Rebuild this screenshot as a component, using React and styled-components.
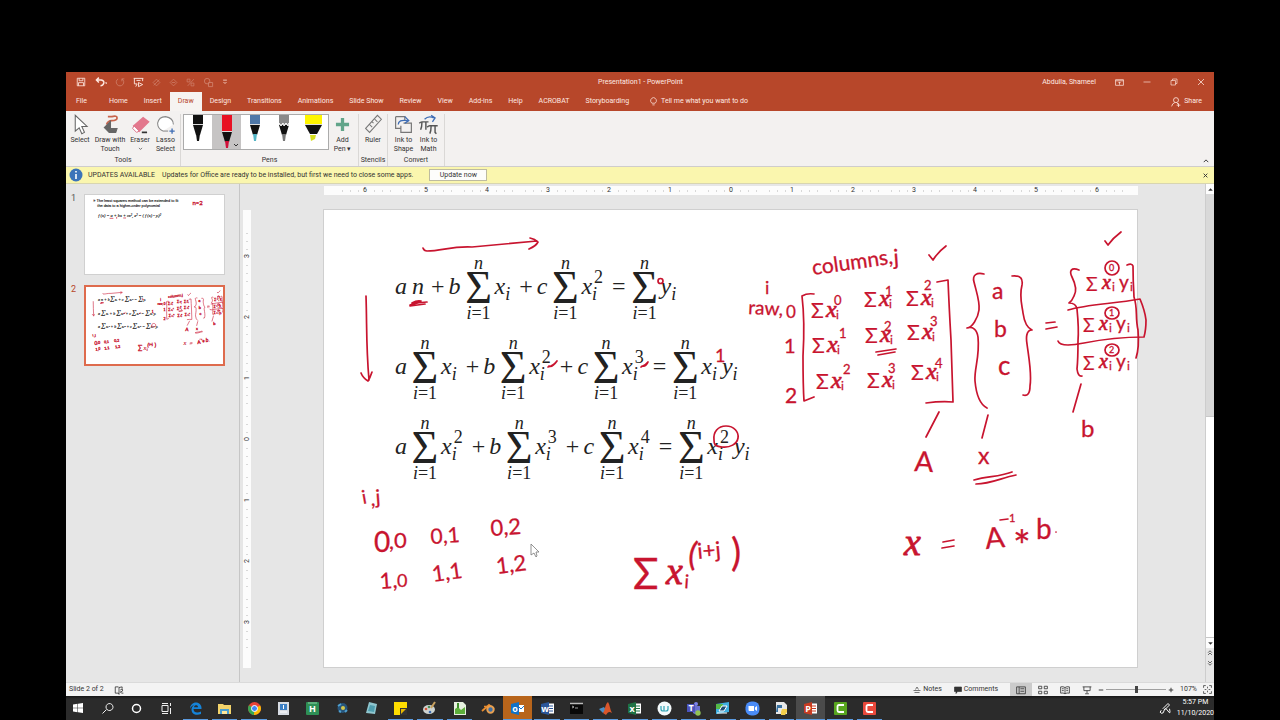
import React, { useState } from 'react';
import styled, { createGlobalStyle } from 'styled-components';

const GlobalStyle = createGlobalStyle`
    * {
        box-sizing: border-box;
    }

    body {
        margin: 0;
        background: #000000;
        font-family: Roboto, 'Noto Sans', sans-serif;
        font-size: 7px;
        line-height: 9px;
        color: #333333;
    }

    button, input {
        font: inherit;
        color: inherit;
        margin: 0;
        padding: 0;
        border: none;
        background: transparent;
    }

    svg {
        display: block;
        flex: none;
    }
`
const Screen = styled.div`
    min-height: 100vh;
    padding: 72px 66px 0;
    display: flex;
    flex-direction: column;
`
const TitleBar = styled.header`
    height: 20px;
    background: #B7472A;
    color: #FFE9E2;
    display: grid;
    grid-template-columns: 1fr auto 1fr;
    align-items: center;
    padding: 0 9px 0 10px;
`
const QuickAccess = styled.div`
    display: flex;
    align-items: center;
    gap: 8px;
`
const IconButton = styled.button`
    display: flex;
    align-items: center;
    justify-content: center;
    opacity: ${({ $dim }) => $dim ? 0.35 : 1};
`
const WindowTools = styled.div`
    display: flex;
    align-items: center;
    justify-content: flex-end;
    gap: 19px;
`
const Tabs = styled.nav`
    height: 19px;
    background: #B7472A;
    display: flex;
    align-items: stretch;
    padding: 0 12px 0 2px;
`
const Tab = styled.button`
    padding: 0 8px;
    color: ${({ $active }) => $active ? '#B7472A' : '#FFE9E2'};
    background: ${({ $active }) => $active ? '#F6F3F1' : 'transparent'};
    display: flex;
    align-items: center;
    gap: 3px;
    white-space: nowrap;

    &:first-child {
        margin-right: 6px;
    }
`
const TellMe = styled(Tab)`
    padding-left: 12px;
`
const Share = styled(Tab)`
    margin-left: auto;
    padding: 0;
`
const Ribbon = styled.section`
    height: 56px;
    background: #F3F1F0;
    border-bottom: 1px solid #CFCDCB;
    display: flex;
    padding-top: 3px;
`
const Group = styled.div`
    width: ${({ $width }) => $width}px;
    border-right: 1px solid #DAD8D6;
    display: flex;
    flex-direction: column;
    justify-content: space-between;
`
const GroupRow = styled.div`
    display: flex;
    justify-content: center;
    align-items: flex-start;
`
const GroupLabel = styled.div`
    text-align: center;
    height: 10px;
`
const Tool = styled.button`
    width: ${({ $width }) => $width || 28}px;
    display: flex;
    flex-direction: column;
    align-items: center;
    gap: 1px;
    line-height: 9px;
    white-space: pre;
    text-align: center;
`
const PenGallery = styled.div`
    width: 146px;
    height: 36px;
    background: #FFFFFF;
    border: 1px solid #ABABAB;
    display: flex;
`
const Pen = styled.button`
    flex: 1;
    display: flex;
    justify-content: center;
    background: ${({ $active }) => $active ? '#C6C4C4' : 'transparent'};
`
const Collapse = styled(IconButton)`
    margin: auto 5px 2px auto;
`
const UpdateBar = styled.section`
    height: 17px;
    background: #FAF6AE;
    border-bottom: 1px solid #D8D5B0;
    display: flex;
    align-items: center;
    padding: 0 6px 0 3px;
`
const UpdateTitle = styled.strong`
    font-weight: 400;
    margin: 0 7px 0 5px;
`
const UpdateButton = styled.button`
    width: 58px;
    height: 12px;
    margin: 0 auto 0 16px;
    background: #FDFDFB;
    border: 1px solid #BDBBA0;
`
const Workspace = styled.main`
    flex: 1;
    display: flex;
    background: #E6E6E6;
`
const Slides = styled.aside`
    width: 174px;
    flex: none;
    border-right: 1px solid #C6C6C6;
    padding: 10px 14px 0 5px;
    display: flex;
    flex-direction: column;
    gap: 10px;
`
const ThumbRow = styled.button`
    display: flex;
    align-items: flex-start;
    gap: 8px;
    font-size: 9px;
    text-align: left;
    color: ${({ $active }) => $active ? '#B7472A' : '#555555'};
`
const Thumb = styled.div`
    flex: 1;
    background: #FFFFFF;
    border: ${({ $active }) => $active ? '2px solid #DE6B4D' : '1px solid #D0D0D0'};

    svg {
        width: 100%;
    }
`
const Editor = styled.div`
    flex: 1;
    min-width: 0;
    display: flex;
    flex-direction: column;
`
const RulerTop = styled.div`
    height: 9px;
    margin: 2px 76px 0 84px;
    background: #FCFCFC;
    display: flex;
    justify-content: center;
    overflow: hidden;
`
const RulerCell = styled.div`
    width: 61px;
    flex: none;
    display: flex;
    align-items: center;
    justify-content: center;
    background: repeating-linear-gradient(90deg, transparent 0 7px, #D8D8D8 7px 8px) center / 100% 2px no-repeat;

    span {
        background: #FCFCFC;
        padding: 0 3px;
    }
`
const EditorBody = styled.div`
    flex: 1;
    display: flex;
`
const RulerSide = styled.div`
    width: 8px;
    margin: 15px 0 14px 3px;
    background: #FCFCFC;
    display: flex;
    flex-direction: column;
    align-items: center;
    justify-content: center;
`
const RulerSideCell = styled.div`
    height: 61px;
    width: 8px;
    display: flex;
    align-items: center;
    justify-content: center;
    background: repeating-linear-gradient(180deg, transparent 0 7px, #D8D8D8 7px 8px) center / 2px 100% no-repeat;

    span {
        writing-mode: vertical-rl;
        rotate: 180deg;
        background: #FCFCFC;
        padding: 3px 0;
        line-height: 8px;
    }
`
const Stage = styled.div`
    flex: 1;
    padding: 14px 67px 12px 72px;
    display: flex;
    align-items: flex-start;
`
const Slide = styled.article`
    flex: 1;
    aspect-ratio: 815 / 459;
    background: #FFFFFF;
    border: 1px solid #CFCFCF;
    position: relative;
    padding: 36px 71px;
`
const Equation = styled.div`
    height: 80px;
    display: flex;
    align-items: center;
    gap: 3px;
    font: italic 24px/34px 'Liberation Serif', serif;
    color: #222222;
`
const SumBox = styled.span`
    width: 28px;
    margin: 0 -1px 0 1px;
    padding-top: 4px;
    display: flex;
    flex-direction: column;
    align-items: center;
    font-size: 18px;
    line-height: 18px;

    b {
        font: normal 46px/32px 'Liberation Serif', serif;
    }
`
const Limit = styled.span`
    white-space: nowrap;

    span {
        font-style: normal;
    }
`
const Count = styled.span`
    margin-left: 2px;
`
const Operator = styled.span`
    font-style: normal;
    margin: 0 1px 0 4px;
`
const Variable = styled.span`
    display: flex;
`
const Scripts = styled.span`
    min-width: 7px;
    display: flex;
    flex-direction: column;
    font-size: 18px;
    line-height: 17px;

    i {
        height: 17px;
    }

    i:first-child:not(:last-child) {
        font-style: normal;
        padding: 0 2px;
    }

    i:only-child {
        margin-top: 17px;
    }
`
const InkLayer = styled.svg`
    position: absolute;
    inset: -1px;
    width: calc(100% + 2px);
    overflow: visible;
    pointer-events: none;
`
const Strokes = styled.g`
    fill: none;
    stroke: #C8142F;
    stroke-width: ${({ $weight }) => $weight};
    stroke-linecap: round;
    stroke-linejoin: round;
`
const Hand = styled.text`
    font-family: ${({ $serif }) => $serif ? "'Liberation Serif', serif" : "Lato, sans-serif"};
    font-style: ${({ $serif }) => $serif ? 'italic' : 'normal'};
    font-size: ${({ $size }) => $size}px;
    fill: #C8142F;
    stroke: #C8142F;
    stroke-width: ${({ $weight }) => $weight || 0};
`
const MiniText = styled.text`
    font: italic ${({ $size }) => $size}px 'Liberation Serif', serif;
    fill: #222222;
    stroke: #222222;
    stroke-width: 0.8;
`
const Caption = styled.text`
    font: 23px 'Liberation Sans', sans-serif;
    fill: #222222;
    stroke: #222222;
    stroke-width: 0.8;
`
const Scrollbar = styled.div`
    width: 9px;
    margin-top: -11px;
    display: flex;
    flex-direction: column;
    border-left: 1px solid #CDCDCD;
    padding-bottom: 14px;
`
const ScrollButton = styled.button`
    height: 10px;
    display: flex;
    align-items: center;
    justify-content: center;
    background: ${({ $plain }) => $plain ? 'transparent' : '#FDFDFD'};
`
const ScrollTrack = styled.div`
    flex: 1;
    background: #D9D9D9;
    display: flex;
    flex-direction: column;
    justify-content: flex-end;
`
const ScrollThumb = styled.div`
    height: 50%;
    background: #FFFFFF;
    border: 1px solid #C8C8C8;
    border-width: 1px 0;
`
const StatusBar = styled.footer`
    height: 14px;
    background: #F3F3F3;
    border-top: 1px solid #DADADA;
    display: flex;
    align-items: center;
    padding: 0 2px 0 3px;
`
const StatusButton = styled.button`
    display: flex;
    align-items: center;
    gap: 2px;
    margin-right: ${({ $after }) => $after || 0}px;
    margin-left: ${({ $push }) => $push ? 'auto' : 0};
    white-space: nowrap;
`
const ViewButton = styled.button`
    width: 22px;
    height: 13px;
    display: flex;
    align-items: center;
    justify-content: center;
    background: ${({ $active }) => $active ? '#CBCBCB' : 'transparent'};
`
const ZoomRange = styled.input`
    appearance: none;
    width: 60px;
    height: 10px;
    margin: 0 2px;
    background: linear-gradient(#A0A0A0, #A0A0A0) center / 100% 1px no-repeat;

    &::-webkit-slider-thumb {
        appearance: none;
        width: 3px;
        height: 7px;
        background: #444444;
    }
`
const ZoomValue = styled(StatusButton)`
    padding: 0 6px;
`
const Taskbar = styled.footer`
    height: 24px;
    background: linear-gradient(#161616, #2B2B2B 3px);
    color: #FFFFFF;
    display: flex;
`
const StartButton = styled.button`
    width: 27px;
    padding-right: 3px;
    display: flex;
    align-items: center;
    justify-content: center;
`
const AppRow = styled.div`
    flex: 1;
    max-width: 791px;
    display: grid;
    grid-template-columns: repeat(27, 1fr);
`
const AppButton = styled.button`
    display: flex;
    align-items: center;
    justify-content: center;
    margin: 0 ${({ $tint }) => $tint ? 0 : 2}px;
    background: ${({ $tint }) => $tint || 'transparent'};
    border-bottom: 1px solid ${({ $open }) => $open ? '#5B9BE0' : 'transparent'};
    border-top: 1px solid transparent;

    text {
        font: 700 9px 'Open Sans', sans-serif;
        text-anchor: middle;
    }
`
const Tray = styled.div`
    margin-left: auto;
    display: flex;
    align-items: center;
    gap: 6px;
`
const Clock = styled.time`
    text-align: center;
    line-height: 11px;
    padding-bottom: 1px;
`

const Line = ({ size = 11, height, box = 16, children, ...rest }) => (
    <svg width={size} height={height || size} viewBox={`0 0 ${box} ${height ? box * height / size : box}`} fill="none" stroke="currentColor" strokeWidth="1.3" aria-hidden="true" {...rest}>
        {children}
    </svg>
)

const Sum = () => (
    <SumBox>
        <Limit>n</Limit>
        <b>Σ</b>
        <Limit>i<span>=1</span></Limit>
    </SumBox>
)

const Var = ({ name = 'x', power }) => (
    <Variable>
        {name}
        <Scripts>{power && <i>{power}</i>}<i>i</i></Scripts>
    </Variable>
)

// [x, y, text, size, rotation, serif]
const notes = [
    [813, 276, 'columns,', 21, -8],
    [894, 266, 'j', 22, -4],
    [765, 295, 'i', 18, 0],
    [748, 315, 'raw,', 19, 3],
    [786, 319, '0', 17, 0],
    [784, 354, '1', 20, 0],
    [785, 404, '2', 21, 0],
    [914, 472, 'A', 28, 3],
    [978, 465, 'x', 23, 0],
    [1081, 438, 'b', 24, 0],
    [992, 300, 'a', 23, 0],
    [994, 338, 'b', 23, 0],
    [998, 376, 'c', 26, 0],
    [363, 505, 'i', 19, -10],
    [371, 507, ',', 20, -4],
    [376, 505, 'j', 20, -4],
    [374, 553, '0', 28, 0],
    [389, 550, ',', 22, 0],
    [394, 549, '0', 22, 0],
    [431, 545, '0,1', 21, -4],
    [491, 537, '0,2', 22, -4],
    [380, 590, '1,', 22, -4],
    [397, 588, '0', 18, 0],
    [433, 583, '1,1', 22, -8],
    [497, 575, '1,2', 22, -7],
    [633, 590, 'Σ', 42, 0],
    [666, 585, 'x', 38, 0, true],
    [684, 589, 'i', 19, 4],
    [687, 566, '(', 33, 8],
    [698, 560, 'i+j', 22, -5],
    [731, 567, ')', 38, 0],
    [904, 556, 'x', 38, 0, true],
    [986, 550, 'A', 29, -6],
    [1013, 562, '*', 42, 0],
    [1036, 540, 'b', 28, 0],
    [1009, 523, '1', 11, 0],
    [715, 363, '1', 18, 0],
]

// [x, y, power, x and y of the power]
const matrix = [
    [811, 319, '0', 834, 306],
    [864, 308, '1', 885, 297],
    [906, 307, '2', 924, 291],
    [812, 354, '1', 839, 339],
    [865, 344, '2', 884, 332],
    [907, 341, '3', 930, 327],
    [816, 390, '2', 843, 375],
    [867, 389, '3', 888, 374],
    [911, 381, '4', 935, 369],
]

const vector = [
    [1086, 292, '0', 269],
    [1083, 333, '1', 314],
    [1083, 371, '2', 351],
]

const strokes = [
    'M423 249q1 3 4 3c15 0 24-5 45-4l65-6M530 239q5 1 8 4-2 4-9 7',
    'M366 297c1 30 0 50 3 84M361 374q2 5 7 8 2-3 4-9',
    'M412 304q5-3 9-2l-11 4q9-3 17-3M410 307l15-2',
    'M548 368q5-1 9-6-5 7-8 5M641 368q5-2 7-5-2 5-6 4',
    'M658 282a2.4 2.4 0 1 0 5 0a2.4 2.4 0 1 0-5 0',
    'M714 441c-1-8 4-14 12-14s13 6 12 12-8 10-16 9-8-3-8-7',
    'M814 295q-7-1-12 2 3 25 1 60 0 30 1 45l10-4',
    'M937 283l11-2q1 25 3 60l2 62q-12-1-27 1',
    'M939 413l-13 25M988 416l-6 23M1081 385l-8 28',
    'M929 256l4 5q5-8 13-14M1105 242l3 4q5-7 13-13',
    'M876 353l20-3M878 356l17-3',
    'M984 275c-7-2-12 1-10 8 3 12 6 20 5 28s-7 18-12 18c6-2 10 2 11 9 2 20-4 32-3 44q2 22 12 27',
    'M1012 277c9-1 11 3 10 9-3 12 0 20 1 28q2 14 9 17c-6 0-6 8-5 14 2 15 5 30 3 42q0 11-7 9',
    'M1046 324l9-1M1046 330l11-2',
    'M1079 271c-8-3-10 1-7 7 4 8 5 14 2 19q-2 5-5 7 7 0 8 6 2 20 1 32 0 18-1 28 1 8 5 7',
    'M1127 266q5-2 6 1 0 15 1 31c4 12 1 20 4 33 1 12 1 19-2 28',
    'M1068 311c20-6 45-6 72-11q5 12 6 21 0 10-2 17c-25 0-45 3-60 6-10 2-24 4-26-2',
    'M974 481c15-4 25-3 38-8M976 485c15 0 25-6 40-9',
    'M943 543l11-2M942 549l12-2M1000 521l8-1M1056 533v0',
]

const InkMarks = ({ weight }) => (
    <>
        <Strokes $weight={weight}>
            {strokes.map((d) => <path key={d} d={d} />)}
            {vector.map(([x, , , cy]) => <ellipse key={cy} cx="1112" cy={cy} rx="7" ry={x === 1086 ? 7 : 6} />)}
        </Strokes>
        {notes.map(([x, y, text, size, turn, serif]) =>
            <Hand key={`${x}-${y}`} x={x} y={y} $size={size} $serif={serif} $weight={serif ? 0.8 : weight - 1.4} transform={`rotate(${turn} ${x} ${y})`}>{text}</Hand>)}
        {matrix.map(([x, y, power, px, py]) => (
            <React.Fragment key={`${x}-${y}`}>
                <Hand x={x} y={y} $size={21} $weight={weight - 1.5}>Σ</Hand>
                <Hand x={x + 15} y={y - 1} $size={24} $serif $weight={0.7}>x</Hand>
                <Hand x={x + 25} y={y + 1} $size={12} $weight={weight - 1.4}>i</Hand>
                <Hand x={px} y={py} $size={13} $weight={weight - 1.4}>{power}</Hand>
            </React.Fragment>
        ))}
        {vector.map(([x, y, power, cy]) => (
            <React.Fragment key={y}>
                <Hand x={x} y={y} $size={19} $weight={weight - 1.5}>Σ</Hand>
                <Hand x={x + 16} y={y - 2} $size={20} $serif $weight={0.7}>x</Hand>
                <Hand x={x + 26} y={y} $size={12} $weight={weight - 1.4}>i</Hand>
                <Hand x={x + 33} y={y - 2} $size={19} $weight={weight - 1.4}>y</Hand>
                <Hand x={x + 44} y={y} $size={12} $weight={weight - 1.4}>i</Hand>
                <Hand x="1109" y={cy + 3} $size={9} $weight={weight - 1.4}>{power}</Hand>
            </React.Fragment>
        ))}
    </>
)

const SlideEquations = () => (
    <>
        <Equation>
            a<Count>n</Count><Operator>+</Operator>b<Sum /><Var /><Operator>+</Operator>c<Sum /><Var power="2" /><Operator>=</Operator><Sum /><Var name="y" />
        </Equation>
        <Equation>
            a<Sum /><Var /><Operator>+</Operator>b<Sum /><Var power="2" /><Operator>+</Operator>c<Sum /><Var power="3" /><Operator>=</Operator><Sum /><Var /><Var name="y" />
        </Equation>
        <Equation>
            a<Sum /><Var power="2" /><Operator>+</Operator>b<Sum /><Var power="3" /><Operator>+</Operator>c<Sum /><Var power="4" /><Operator>=</Operator><Sum /><Var power="2" /><Var name="y" />
        </Equation>
    </>
)

const miniRows = [
    [294, [[395, 'a n + b'], [494, 'xᵢ + c'], [582, 'xᵢ² ='], [664, 'yᵢ']], [466, 553, 634]],
    [374, [[395, 'a'], [442, 'xᵢ + b'], [531, 'xᵢ² + c'], [624, 'xᵢ³ ='], [704, 'xᵢ yᵢ']], [413, 503, 596, 675]],
    [454, [[395, 'a'], [442, 'xᵢ² + b'], [536, 'xᵢ³ + c'], [629, 'xᵢ⁴ ='], [709, 'xᵢ² yᵢ']], [413, 508, 600, 680]],
]

const pens = [
    { name: 'Black pen', color: '#111111', tip: '#111111' },
    { name: 'Red pen', color: '#E81123', tip: '#D0103A' },
    { name: 'Galaxy pen', color: '#4F78A8', tip: '#55B5C5' },
    { name: 'Pencil', color: '#8A8A8A', tip: '#777777', pencil: true },
    { name: 'Highlighter', color: '#FFF500', tip: '#D7E020', wide: true },
]

const PenIcon = ({ color, tip, wide, pencil, active }) => (
    <svg width="26" height="34" viewBox="0 0 26 34" aria-hidden="true">
        <g transform={active ? 'translate(0 7)' : undefined}>
            <path d={wide ? 'M5 0h17v9H5z' : 'M8 -8h10v17H8z'} fill={color} />
            <path d={wide ? 'M5 10h17l-5 9h-7z' : 'M8 10h10l-3 10h-4z'} fill="#111111" />
            {pencil && <path d="M8 8l2 3 2-3 1 3 2-3 2 3 1-3v3" fill="none" stroke="#FFFFFF" />}
            <path d={wide ? 'M10 20h6l-1 4-4 2z' : 'M11 19h4l-1 7h-2z'} fill={tip} />
            <path d={wide ? 'M5 9.500h17' : 'M8 9.500h10'} stroke="#DDDDDD" />
        </g>
        {active && <path d="M20 29l2 2 2-2" fill="none" stroke="#333333" />}
    </svg>
)

const tile = (bg, letter, extra) => (
    <svg width="15" height="15" viewBox="0 0 15 15" aria-hidden="true">
        <rect x="1" y="1" width="13" height="13" rx="1" fill={bg} />
        {extra}
        {letter && <text x="7.500" y="11" fill="#FFFFFF">{letter}</text>}
    </svg>
)

const office = (color, letter) => (
    <svg width="15" height="15" viewBox="0 0 15 15" aria-hidden="true">
        <path d="M8 2.500h6v10H8z" fill="#FFFFFF" />
        <path d="M9 5h4M9 7.500h4M9 10h4" stroke={color} />
        <path d="M1 3l8-2v13l-8-2z" fill={color} />
        <text x="5" y="10.500" fill="#FFFFFF">{letter}</text>
    </svg>
)

const art = (children) => <svg width="15" height="15" viewBox="0 0 15 15" aria-hidden="true">{children}</svg>

const apps = [
    { name: 'Search', icon: art(<path d="M2.500 12.500l4-4M6 6a3.500 3.500 0 1 1 1 2.500A3.500 3.500 0 0 1 6 6" fill="none" stroke="#EEEEEE" />) },
    { name: 'Cortana', icon: art(<circle cx="7.500" cy="7.500" r="4" fill="none" stroke="#FFFFFF" strokeWidth="1.500" />) },
    { name: 'Task view', icon: art(<path d="M3 4.500h6v6H3zM3 2.500h6M3 12.500h6M11.500 2v3M11.500 7v6" fill="none" stroke="#EEEEEE" />) },
    { name: 'Edge', open: true, icon: art(<path d="M2 8C2 4 5 1.500 8 1.500s6 2.500 5.500 6.500H5.500c0 4 4.500 4 7.500 2.500v2.500c-5 2-9.500 0-9.500-4.500 0-2 1-3.500 3-4.500C4 4.500 2.500 6 2 8zm4-1.800h4c0-2.500-3.500-2.500-4 0z" fill="#1583D8" />) },
    { name: 'File Explorer', open: true, icon: art(<><path d="M1 3h5l1 1h7v9H1z" fill="#F3D36B" /><path d="M3 8h9v5H3z" fill="#4C9FD0" /><path d="M5 10h5v3H5z" fill="#FFE79A" /></>) },
    { name: 'Chrome', open: true, icon: art(<><circle cx="7.500" cy="7.500" r="6.500" fill="#E94335" /><path d="M7.500 7.500L1.900 4.300A6.500 6.500 0 0 0 7 14z" fill="#34A853" /><path d="M7.500 7.500L7 14a6.500 6.500 0 0 0 6.200-9.500z" fill="#FBBC05" /><circle cx="7.500" cy="7.500" r="3" fill="#4285F4" stroke="#FFFFFF" /></>) },
    { name: 'System information', icon: art(<><path d="M2 1h11v13H2z" fill="#D7DCE3" /><path d="M4 3h7v6H4z" fill="#3B7FC4" /><path d="M7.500 4v4M4 11h7" stroke="#FFFFFF" /></>) },
    { name: 'HEC', icon: tile('#2E8F55', 'H', <path d="M3 2h9" stroke="#8AD0A5" />) },
    { name: 'Weather tools', icon: art(<><circle cx="7.500" cy="7" r="5" fill="#28557A" /><circle cx="8" cy="7" r="2" fill="#D5C84B" /><path d="M3 5l3-2M10 11l2-2M4 10l2 1" stroke="#4FA0D0" strokeWidth="2" /></>) },
    { name: 'Notebook', icon: art(<><path d="M5 1l8 2-2 10-9-1z" fill="#8FC6CF" /><path d="M6 4l5 1-1 6-6-1z" fill="#4F9EAF" /></>) },
    { name: 'Sticky Notes', open: true, icon: art(<><path d="M1 1h13v7l-6 6H1z" fill="#FFDD00" /><path d="M14 7v7H7V7z" fill="#333333" /><path d="M8 8h5l-5 5z" fill="#E8B800" /></>) },
    { name: 'Paint', open: true, icon: art(<><ellipse cx="7" cy="8.500" rx="6" ry="4.500" fill="#CDD3D1" /><circle cx="4" cy="8" r="1.300" fill="#D9573B" /><circle cx="7" cy="6" r="1.300" fill="#4B8C56" /><circle cx="8" cy="11" r="1.300" fill="#3D6BB0" /><path d="M9 7l4-6" stroke="#C9A15E" strokeWidth="2" /></>) },
    { name: 'Greenshot', open: true, icon: art(<><path d="M2 1h9l3 3v10H2z" fill="#E6F0DF" /><path d="M3 8l3-2 3 3 4-3v7H3z" fill="#5DAF3B" /><path d="M6 2v5" stroke="#3E8D2B" strokeWidth="2" /></>) },
    { name: 'Blender', icon: art(<><path d="M1 10l7-6 5 4" fill="none" stroke="#E88B2D" strokeWidth="1.800" /><path d="M3 5.500h6" stroke="#E88B2D" strokeWidth="1.500" /><circle cx="9.500" cy="8.500" r="3.200" fill="#3C6FA7" stroke="#E9A050" strokeWidth="2" /></>) },
    { name: 'Outlook', open: true, tint: '#B8651B', icon: art(<><path d="M8 4h6v7H8z" fill="#FFFFFF" /><path d="M8 5l3 3 3-3" fill="none" stroke="#1976C9" /><path d="M1 3l8-2v13l-8-2z" fill="#1172C6" /><text x="5" y="10.500" fill="#FFFFFF">o</text></>) },
    { name: 'Word', open: true, icon: office('#2A569A', 'w') },
    { name: 'Command Prompt', open: true, icon: art(<><path d="M1 2h13v11H1z" fill="#080808" /><path d="M1 2.500h13" stroke="#BBBBBB" strokeWidth="1.500" /><path d="M3 5l2 1-2 1M6 7h3" fill="none" stroke="#DDDDDD" strokeWidth="0.700" /></>) },
    { name: 'MATLAB', open: true, icon: art(<><path d="M1 8l5-2 2 3-3 3z" fill="#4C8EC4" /><path d="M5 12c2-2 2-9 5-11 2 3 2 8 4 11-3-2-4-1-6 2z" fill="#D9562B" /></>) },
    { name: 'Excel', open: true, icon: office('#1F7244', 'x') },
    { name: 'Wacom', open: true, icon: art(<><circle cx="7.500" cy="7.500" r="7" fill="#F4FAFB" /><path d="M4 5v3q0 2 2 2h1V5M7 10h2q2 0 2-2V5" fill="none" stroke="#2FA4B5" strokeWidth="1.200" /></>) },
    { name: 'Teams', open: true, icon: art(<><circle cx="10" cy="3" r="2" fill="#7B83EB" /><path d="M6 5h8v6q-3 4-7 1z" fill="#6A70CE" /><path d="M1 3h8v8H1z" fill="#4B53BC" /><text x="5" y="10" fill="#FFFFFF">T</text><circle cx="12" cy="12" r="2.700" fill="#92C353" /></>) },
    { name: 'Remote desktop', open: true, icon: art(<><path d="M1 3l13-2v10L1 13z" fill="#3FAFE0" /><path d="M1 3h7v5H1z" fill="#56B947" /><path d="M4 10l3-5h5l-3 5zM2 12h10" fill="#1F4F78" stroke="#FFFFFF" /></>) },
    { name: 'Zoom', open: true, icon: art(<><rect x="0.500" y="0.500" width="14" height="14" rx="6" fill="#4A8CF7" /><path d="M3.500 5h5.500v5h-4.500q-1 0-1-1zM10 6.500l2-1.500v5l-2-1.500z" fill="#FFFFFF" /></>) },
    { name: 'Python', open: true, icon: art(<><path d="M2 1h8l3 3v9H2z" fill="#E8E8E8" /><path d="M3 4h5v3H4v4H2z" fill="#39719F" /><path d="M8 8h5v3l-2 3H7v-3z" fill="#F4CE4B" /></>) },
    { name: 'PowerPoint', open: true, tint: '#4B4B4B', icon: office('#C83C22', 'P') },
    { name: 'Camtasia', open: true, icon: tile('#58A51F', '', <path d="M11 4H6Q4.500 4 4.500 5.500v4Q4.500 11 6 11h5" fill="none" stroke="#FFFFFF" strokeWidth="1.800" />) },
    { name: 'Camtasia Recorder', open: true, icon: tile('#E8493C', '', <path d="M11 4H6Q4.500 4 4.500 5.500v4Q4.500 11 6 11h5" fill="none" stroke="#FFFFFF" strokeWidth="1.800" />) },
]

const tabs = ['File', 'Home', 'Insert', 'Draw', 'Design', 'Transitions', 'Animations', 'Slide Show', 'Review', 'View', 'Add-ins', 'Help', 'ACROBAT', 'Storyboarding']

const App = () => {
    const [tab, setTab] = useState('Draw')
    const [pen, setPen] = useState('Red pen')
    const [zoom, setZoom] = useState(50)

    return (
        <>
            <GlobalStyle />
            <Screen>
                <TitleBar>
                    <QuickAccess>
                        <IconButton aria-label="Save"><Line size={10}><path d="M2 2h12v12H2zM5 2v4h6V2M4 14V9h8v5" /></Line></IconButton>
                        <IconButton aria-label="Undo"><Line size={13}><path d="M3 5h6q4 1 3 4-1 3-4 3M6 2L3 5l3 3" strokeWidth="1.800" /><path d="M14 8l1 1 1-1" /></Line></IconButton>
                        <IconButton aria-label="Repeat" $dim><Line size={10}><path d="M11 3a6 6 0 1 1-6 0M11 3v4M11 3h4" /></Line></IconButton>
                        <IconButton aria-label="From beginning"><Line size={11}><path d="M1 2h14M2 2v8h4M14 2v4M5 5h6M8 8l6 3-6 3zM4 14l2-4" /></Line></IconButton>
                        <IconButton aria-label="Shape fill" $dim><Line size={9}><path d="M2 8l6-6 6 6-6 6zM3 13l10-10" /></Line></IconButton>
                        <IconButton aria-label="Shape outline" $dim><Line size={9}><path d="M2 8l6-6 6 6-6 6zM5 8h6" /></Line></IconButton>
                        <IconButton aria-label="Selection" $dim><Line size={9}><path d="M2 2h5v5H2zM9 9h5v5H9zM3 14L14 2" /></Line></IconButton>
                        <IconButton aria-label="Shapes" $dim><Line size={11}><circle cx="6" cy="6" r="4" /><path d="M8 8h6v6H8z" /></Line></IconButton>
                        <IconButton aria-label="Customize"><Line size={6}><path d="M3 3h10M4 8l4 4 4-4" strokeWidth="2" /></Line></IconButton>
                    </QuickAccess>
                    <span>Presentation1 - PowerPoint</span>
                    <WindowTools>
                        <span>Abdulla, Shameel</span>
                        <IconButton aria-label="Ribbon options"><Line size={9}><path d="M1 3h14v10H1zM1 5h14M8 12V7M6 9l2-2 2 2" /></Line></IconButton>
                        <IconButton aria-label="Minimize"><Line size={8}><path d="M1 8h14" /></Line></IconButton>
                        <IconButton aria-label="Restore"><Line size={8}><path d="M2 5h9v9H2zM5 5V2h9v9h-3" /></Line></IconButton>
                        <IconButton aria-label="Close"><Line size={8}><path d="M2 2l12 12M14 2L2 14" strokeWidth="1.500" /></Line></IconButton>
                    </WindowTools>
                </TitleBar>
                <Tabs>
                    {tabs.map((name) => <Tab key={name} $active={name === tab} onClick={() => setTab(name)}>{name}</Tab>)}
                    <TellMe><Line size={9}><path d="M5 11Q2 8 3 5q2-4 5-4t5 4q1 3-2 6zM6 14h4" /></Line>Tell me what you want to do</TellMe>
                    <Share><Line size={10}><circle cx="8" cy="5" r="4" /><path d="M1 15q1-5 5-6M9 9l3 3M12 10v6M9 13h6" /></Line>Share</Share>
                </Tabs>
                <Ribbon>
                    <Group $width={115}>
                        <GroupRow>
                            <Tool $width={25}><Line size={21}><path d="M4 1v12l3-2.500 2 4.500 2-1-2-4.500h4z" strokeWidth="0.800" stroke="#666666" fill="#FFFFFF" /></Line>Select</Tool>
                            <Tool $width={35}><Line size={21}><path d="M5 8q1-3 4-3 4 0 4-2t-4-1H6" stroke="#C8644C" /><path d="M8 5v6h5l-1 3H7l-4-4" fill="#666666" stroke="#666666" strokeWidth="0.800" /></Line>{'Draw with\nTouch'}</Tool>
                            <Tool $width={25}><Line size={21}><path d="M3 9l7-6 4 3-7 7z" fill="#E3788D" stroke="#E3788D" /><path d="M3 9l4 4-2 1-3-3z" fill="#FFFFFF" stroke="#D86A80" strokeWidth="0.700" /><path d="M9 14h4" /></Line>Eraser<Line size={5}><path d="M3 6l5 5 5-5" strokeWidth="2" /></Line></Tool>
                            <Tool $width={26}><Line size={21}><path d="M6 13Q2 11 2 7q1-5 6-5 6 1 6 6" fill="#FFFFFF" stroke="#888888" strokeWidth="0.800" /><path d="M6 13h4" stroke="#888888" strokeWidth="0.800" /><path d="M13 11v4M11 13h4" stroke="#3E6DB5" strokeWidth="1" /></Line>{'Lasso\nSelect'}</Tool>
                        </GroupRow>
                        <GroupLabel>Tools</GroupLabel>
                    </Group>
                    <Group $width={178}>
                        <GroupRow>
                            <PenGallery>
                                {pens.map((item) => (
                                    <Pen key={item.name} aria-label={item.name} $active={item.name === pen} onClick={() => setPen(item.name)}>
                                        <PenIcon {...item} active={item.name === pen} />
                                    </Pen>
                                ))}
                            </PenGallery>
                            <Tool><Line size={21}><path d="M8 3v10M3 8h10" stroke="#62A58A" strokeWidth="2.500" /></Line>{'Add\nPen ▾'}</Tool>
                        </GroupRow>
                        <GroupLabel>Pens</GroupLabel>
                    </Group>
                    <Group $width={29}>
                        <GroupRow>
                            <Tool><Line size={21}><path d="M2 11L11 1l3 3-9 10zM5 8l2 2M7 6l1 1M9 4l2 2" stroke="#777777" strokeWidth="0.800" /></Line>Ruler</Tool>
                        </GroupRow>
                        <GroupLabel>Stencils</GroupLabel>
                    </Group>
                    <Group $width={57}>
                        <GroupRow>
                            <Tool $width={25}><Line size={21}><path d="M2 2h7v3M2 2v9h4M8 7h6v7H6V9" stroke="#777777" strokeWidth="0.900" /><path d="M4 8q0-4 7-3M9 2l3 3-3 2" stroke="#3E6DB5" strokeWidth="1" /></Line>{'Ink to\nShape'}</Tool>
                            <Tool $width={25}><Line size={21}><path d="M1 7q1-1 2-1h5M3 6q0 4-1 6M6 6v6M7 10q1-1 2-1h6M10 9q0 4-1 6M13 9v5l1 1" strokeWidth="1.100" stroke="#555555" /><path d="M5 4q3-3 7-1M10 1l3 2-2 3" stroke="#3E6DB5" strokeWidth="1" /></Line>{'Ink to\nMath'}</Tool>
                        </GroupRow>
                        <GroupLabel>Convert</GroupLabel>
                    </Group>
                    <Collapse aria-label="Collapse the ribbon"><Line size={6}><path d="M2 11l6-6 6 6" strokeWidth="2.500" /></Line></Collapse>
                </Ribbon>
                <UpdateBar>
                    <svg width="14" height="14" viewBox="0 0 14 14" aria-hidden="true">
                        <circle cx="7" cy="7" r="6.500" fill="#3B74B9" />
                        <path d="M7 6v5M7 3v1.500" stroke="#FFFFFF" strokeWidth="1.600" />
                    </svg>
                    <UpdateTitle>UPDATES AVAILABLE</UpdateTitle>
                    <span>Updates for Office are ready to be installed, but first we need to close some apps.</span>
                    <UpdateButton>Update now</UpdateButton>
                    <IconButton aria-label="Dismiss"><Line size={5}><path d="M2 2l12 12M14 2L2 14" strokeWidth="3" /></Line></IconButton>
                </UpdateBar>
                <Workspace>
                    <Slides>
                        <ThumbRow>
                            1
                            <Thumb>
                                <svg viewBox="0 0 834 474">
                                    <Caption x="50" y="44">» The least squares method can be extended to fit</Caption>
                                    <Caption x="74" y="70">the data to a higher-order polynomial</Caption>
                                    <MiniText x="80" y="130" $size={26}>f (x) = a + bx + cx², e² = ( f (x) - yᵢ)²</MiniText>
                                    <Strokes $weight={4}><path d="M150 140h18M190 134v6M232 138h12" /></Strokes>
                                    <Hand x="645" y="60" $size={36} $weight={2}>n=2</Hand>
                                </svg>
                            </Thumb>
                        </ThumbRow>
                        <ThumbRow $active>
                            2
                            <Thumb $active>
                                <svg viewBox="323 210 815 459">
                                    {miniRows.map(([y, parts, sums]) => (
                                        <React.Fragment key={y}>
                                            {parts.map(([x, text]) => <MiniText key={x} x={x} y={y} $size={24}>{text}</MiniText>)}
                                            {sums.map((x) => <MiniText key={x} x={x} y={y + 8} $size={46}>Σ</MiniText>)}
                                        </React.Fragment>
                                    ))}
                                    <InkMarks weight={3.4} />
                                </svg>
                            </Thumb>
                        </ThumbRow>
                    </Slides>
                    <Editor>
                        <RulerTop>
                            {[6, 5, 4, 3, 2, 1, 0, 1, 2, 3, 4, 5, 6].map((n, index) => <RulerCell key={index}><span>{n}</span></RulerCell>)}
                        </RulerTop>
                        <EditorBody>
                            <RulerSide>
                                {[3, 2, 1, 0, 1, 2, 3].map((n, index) => <RulerSideCell key={index}><span>{n}</span></RulerSideCell>)}
                            </RulerSide>
                            <Stage>
                                <Slide>
                                    <SlideEquations />
                                    <InkLayer viewBox="323 210 815 459">
                                        <InkMarks weight={1.7} />
                                        <path d="M531 545v11l3-2 2 4 1-1-1-4h3z" fill="#FFFFFF" stroke="#777777" strokeWidth="0.800" />
                                    </InkLayer>
                                </Slide>
                            </Stage>
                            <Scrollbar>
                                <ScrollButton aria-label="Scroll up"><Line size={5}><path d="M2 11l6-6 6 6z" fill="currentColor" /></Line></ScrollButton>
                                <ScrollTrack><ScrollThumb /></ScrollTrack>
                                <ScrollButton aria-label="Scroll down"><Line size={5}><path d="M2 5l6 6 6-6z" fill="currentColor" /></Line></ScrollButton>
                                <ScrollButton $plain aria-label="Previous slide"><Line size={6}><path d="M3 7l5-5 5 5M3 13l5-5 5 5" strokeWidth="2" /></Line></ScrollButton>
                                <ScrollButton $plain aria-label="Next slide"><Line size={6}><path d="M3 3l5 5 5-5M3 9l5 5 5-5" strokeWidth="2" /></Line></ScrollButton>
                            </Scrollbar>
                        </EditorBody>
                    </Editor>
                </Workspace>
                <StatusBar>
                    <StatusButton $after={10}>Slide 2 of 2</StatusButton>
                    <StatusButton aria-label="Spelling"><Line size={10}><path d="M7 3H2v10h5l1 2V4zM8 4l5-1v3M10 8q4-3 4 0t-4 3l2 2h3" /></Line></StatusButton>
                    <StatusButton $push $after={12}><Line size={8}><path d="M1 9h14M3 13h10M5 7l3-5 3 5" /></Line>Notes</StatusButton>
                    <StatusButton $after={12}><Line size={8}><path d="M1 2h14v9H7l-3 4v-4H1z" fill="currentColor" /></Line>Comments</StatusButton>
                    <ViewButton $active aria-label="Normal view"><Line size={10}><path d="M1 3h14v11H1zM5 3v11M7 6h6M7 10h6" /></Line></ViewButton>
                    <ViewButton aria-label="Slide sorter"><Line size={10}><path d="M1 2h5v4H1zM10 2h5v4h-5zM1 10h5v4H1zM10 10h5v4h-5z" /></Line></ViewButton>
                    <ViewButton aria-label="Reading view"><Line size={10}><path d="M8 4Q5 2 1 3v10q4-1 7 1 3-2 7-1V3q-4-1-7 1v10M3 6h3M3 9h3M10 6h3M10 9h3" /></Line></ViewButton>
                    <ViewButton aria-label="Slide show"><Line size={10}><path d="M1 3h14M3 3v6h10V3M8 9v4M5 14h6" /></Line></ViewButton>
                    <IconButton aria-label="Zoom out"><Line size={6}><path d="M2 8h12" strokeWidth="2.500" /></Line></IconButton>
                    <ZoomRange type="range" aria-label="Zoom" value={zoom} onChange={(e) => setZoom(e.target.value)} />
                    <IconButton aria-label="Zoom in"><Line size={6}><path d="M2 8h12M8 2v12" strokeWidth="2.500" /></Line></IconButton>
                    <ZoomValue>107%</ZoomValue>
                    <IconButton aria-label="Fit slide"><Line size={9}><path d="M1 5V1h4M11 1h4v4M15 11v4h-4M5 15H1v-4M8 3v3M8 10v3M3 8h3M10 8h3" /></Line></IconButton>
                </StatusBar>
                <Taskbar>
                    <StartButton aria-label="Start">
                        <svg width="10" height="10" viewBox="0 0 10 10" fill="#FFFFFF" aria-hidden="true">
                            <path d="M0 1.400l4.500-.6v3.900H0zM5 .7L10 0v4.700H5zM0 5.300h4.500v3.900L0 8.600zM5 5.300h5V10l-5-.7z" />
                        </svg>
                    </StartButton>
                    <AppRow>
                        {apps.map(({ name, icon, open, tint }) => <AppButton key={name} aria-label={name} $open={open} $tint={tint}>{icon}</AppButton>)}
                    </AppRow>
                    <Tray>
                        <Line size={12}><path d="M3 11q-3 3 0 4t4-4 5 1 2-3M5 9l7-7 2 2-7 7" /></Line>
                        <Clock>5:57 PM<br />11/10/2020</Clock>
                    </Tray>
                </Taskbar>
            </Screen>
        </>
    )
}

export default App;
